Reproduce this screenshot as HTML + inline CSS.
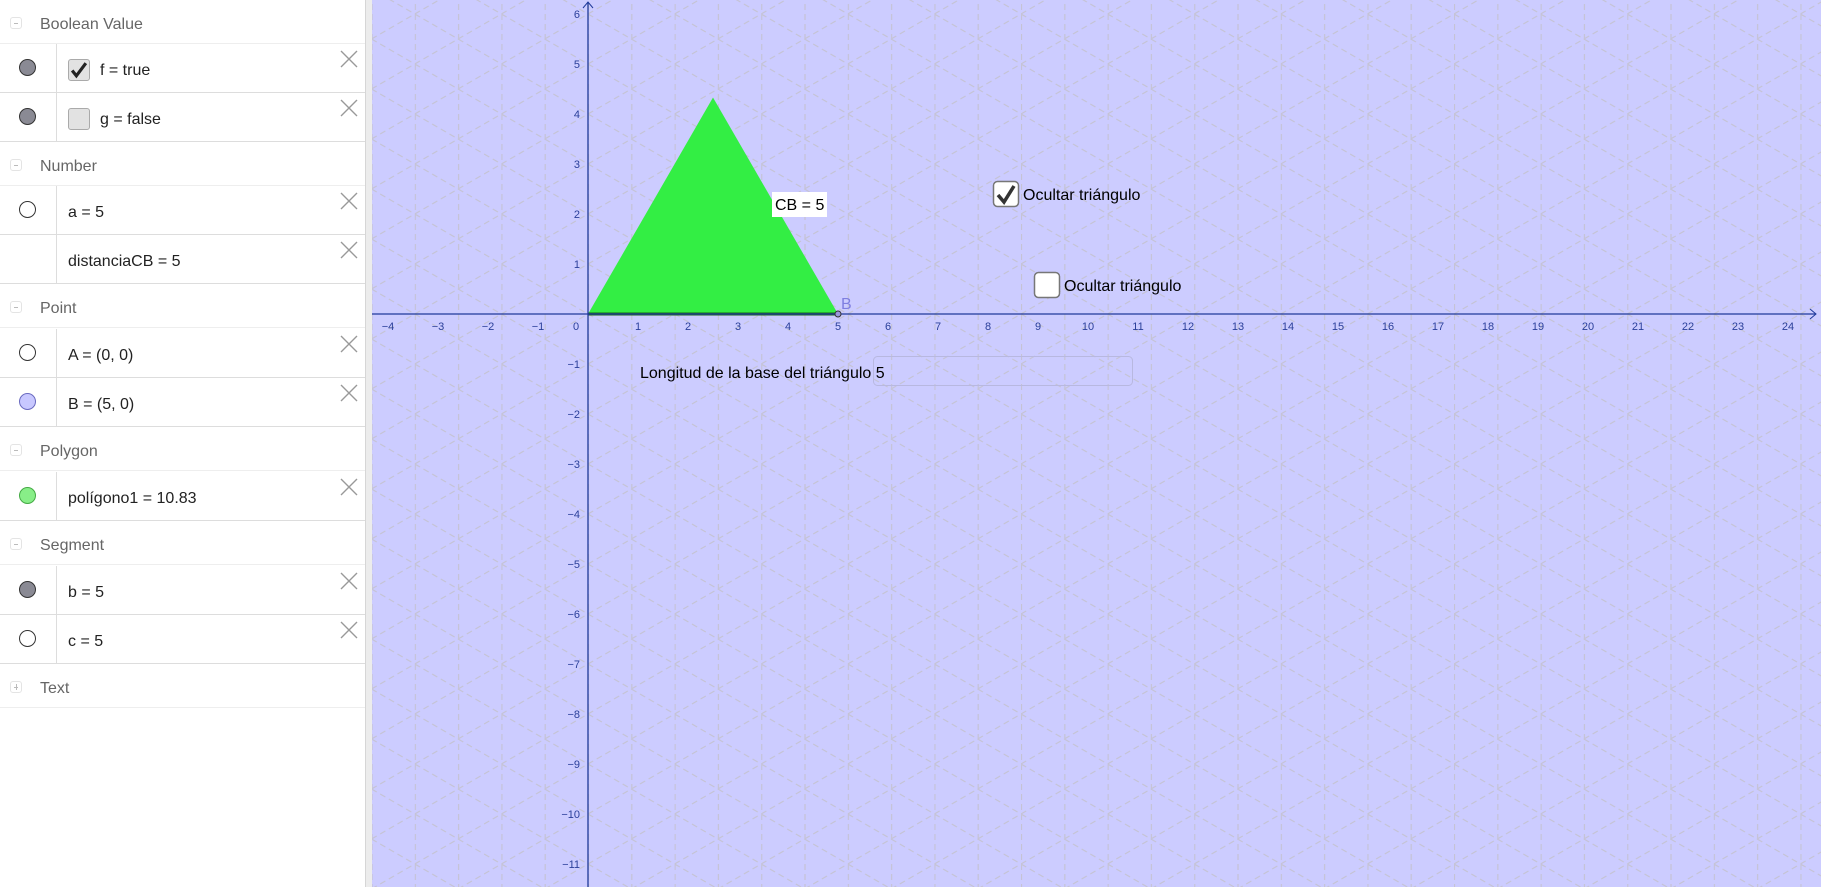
<!DOCTYPE html>
<html><head><meta charset="utf-8"><style>
body{margin:0;width:1821px;height:887px;overflow:hidden;font-family:"Liberation Sans",sans-serif;background:#fff;position:relative}
#side{position:absolute;left:0;top:0;width:365px;height:887px;background:#fff}
#sep{position:absolute;left:365px;top:0;width:7px;height:887px;background:#ececec;border-left:1px solid #d6d6d6;box-sizing:border-box}
.hdr{position:absolute;left:0;width:365px;height:44px;border-bottom:1px solid #eee;box-sizing:border-box;color:#666;font-size:16px;line-height:50px}
.hdr span.m{position:absolute;left:10px;top:17px;width:12px;height:12px;border:1px solid #e4e4e4;border-radius:3px;box-sizing:border-box}
.hdr span.m:after{content:"";position:absolute;left:3px;top:5px;width:4px;height:1px;background:#bbb}
.hdr span.p:before{content:"";position:absolute;left:5px;top:2px;width:1px;height:6px;background:#bbb}
.hdr b{font-weight:normal;position:absolute;left:40px}
.row{position:absolute;left:0;width:365px;height:49px;border-bottom:1px solid #ddd;box-sizing:border-box;font-size:16px;color:#222}
.row .v{position:absolute;left:56px;top:0;width:1px;height:48px;background:#ddd}
.row .c{position:absolute;left:19px;top:15px;width:17px;height:17px;border-radius:50%;border:1.5px solid #333;box-sizing:border-box}
.row .t{position:absolute;left:68px;top:18px;white-space:nowrap}
.row .x{position:absolute;left:340px;top:6px;width:18px;height:18px}
.cb{position:absolute;left:68px;top:15px;width:22px;height:22px;border:1px solid #aaa;border-radius:3px;background:#e2e2e2;box-sizing:border-box}
</style></head><body>
<div id="side">
<div class="hdr" style="top:0"><span class="m"></span><b>Boolean Value</b></div>
<div class="row" style="top:44px"><div class="c" style="background:#8a8a94"></div><div class="v"></div><div class="cb"><svg width="20" height="20" viewBox="0 0 19 19" style="position:absolute;left:0;top:0"><path d="M3 10 L7 15 L16 3" stroke="#222" stroke-width="3" fill="none"/></svg></div><div class="t" style="left:100px">f = true</div><svg class="x" viewBox="0 0 18 18"><path d="M1 1L17 17M17 1L1 17" stroke="#999" stroke-width="1.4"/></svg></div>
<div class="row" style="top:93px"><div class="c" style="background:#8a8a94"></div><div class="v"></div><div class="cb"></div><div class="t" style="left:100px">g = false</div><svg class="x" viewBox="0 0 18 18"><path d="M1 1L17 17M17 1L1 17" stroke="#999" stroke-width="1.4"/></svg></div>
<div class="hdr" style="top:142px"><span class="m"></span><b>Number</b></div>
<div class="row" style="top:186px"><div class="c" style="background:#fff"></div><div class="v"></div><div class="t">a = 5</div><svg class="x" viewBox="0 0 18 18"><path d="M1 1L17 17M17 1L1 17" stroke="#999" stroke-width="1.4"/></svg></div>
<div class="row" style="top:235px"><div class="v"></div><div class="t">distanciaCB = 5</div><svg class="x" viewBox="0 0 18 18"><path d="M1 1L17 17M17 1L1 17" stroke="#999" stroke-width="1.4"/></svg></div>
<div class="hdr" style="top:284px"><span class="m"></span><b>Point</b></div>
<div class="row" style="top:329px"><div class="c" style="background:#fff"></div><div class="v"></div><div class="t">A = (0, 0)</div><svg class="x" viewBox="0 0 18 18"><path d="M1 1L17 17M17 1L1 17" stroke="#999" stroke-width="1.4"/></svg></div>
<div class="row" style="top:378px"><div class="c" style="background:#c8c8ff;border-color:#6a6ac0"></div><div class="v"></div><div class="t">B = (5, 0)</div><svg class="x" viewBox="0 0 18 18"><path d="M1 1L17 17M17 1L1 17" stroke="#999" stroke-width="1.4"/></svg></div>
<div class="hdr" style="top:427px"><span class="m"></span><b>Polygon</b></div>
<div class="row" style="top:472px"><div class="c" style="background:#88ee88;border-color:#4a4"></div><div class="v"></div><div class="t">polígono1 = 10.83</div><svg class="x" viewBox="0 0 18 18"><path d="M1 1L17 17M17 1L1 17" stroke="#999" stroke-width="1.4"/></svg></div>
<div class="hdr" style="top:521px"><span class="m"></span><b>Segment</b></div>
<div class="row" style="top:566px"><div class="c" style="background:#8a8a94"></div><div class="v"></div><div class="t">b = 5</div><svg class="x" viewBox="0 0 18 18"><path d="M1 1L17 17M17 1L1 17" stroke="#999" stroke-width="1.4"/></svg></div>
<div class="row" style="top:615px"><div class="c" style="background:#fff"></div><div class="v"></div><div class="t">c = 5</div><svg class="x" viewBox="0 0 18 18"><path d="M1 1L17 17M17 1L1 17" stroke="#999" stroke-width="1.4"/></svg></div>
<div class="hdr" style="top:664px"><span class="m p"></span><b>Text</b></div>
</div>
<div id="sep"></div>
<svg style="position:absolute;left:0;top:0" width="1821" height="887">
<defs><pattern id="g" patternUnits="userSpaceOnUse" x="588" y="314" width="86.6025" height="50">
<g stroke="#bdbaa8" stroke-width="1.2" stroke-dasharray="6,4" fill="none">
<path d="M0.5 0V50M43.8 0V50"/>
<path d="M0 0L86.6025 50M0 50L86.6025 0"/>
</g></pattern></defs>
<rect x="372" y="0" width="1449" height="887" fill="#ccccff"/>
<rect x="372" y="0" width="1449" height="887" fill="url(#g)" opacity="0.5"/>
<polygon points="588,314 838,314 713,97.5" fill="#33ee44"/>
<line x1="588" y1="314" x2="838" y2="314" stroke="#1a661a" stroke-width="3"/>
<line x1="372" y1="314" x2="1816" y2="314" stroke="#1f3a9a" stroke-width="1.3"/>
<path d="M1810 309L1816 314L1810 319" stroke="#1f3a9a" fill="none"/>
<line x1="588" y1="2" x2="588" y2="887" stroke="#1f3a9a" stroke-width="1.3"/>
<path d="M583 8L588 2L593 8" stroke="#1f3a9a" fill="none"/>
<circle cx="838" cy="314" r="3" fill="#9999dd" stroke="#333"/>
<text x="841" y="309" font-size="16" fill="#7f7fe0" font-family="Liberation Sans">B</text>
<g font-family="Liberation Sans" font-size="11" fill="#2a3f9a" text-anchor="middle">
<text x="388" y="330">−4</text><text x="438" y="330">−3</text><text x="488" y="330">−2</text><text x="538" y="330">−1</text><text x="576" y="330">0</text>
<text x="638" y="330">1</text><text x="688" y="330">2</text><text x="738" y="330">3</text><text x="788" y="330">4</text><text x="838" y="330">5</text><text x="888" y="330">6</text><text x="938" y="330">7</text><text x="988" y="330">8</text><text x="1038" y="330">9</text><text x="1088" y="330">10</text><text x="1138" y="330">11</text><text x="1188" y="330">12</text><text x="1238" y="330">13</text><text x="1288" y="330">14</text><text x="1338" y="330">15</text><text x="1388" y="330">16</text><text x="1438" y="330">17</text><text x="1488" y="330">18</text><text x="1538" y="330">19</text><text x="1588" y="330">20</text><text x="1638" y="330">21</text><text x="1688" y="330">22</text><text x="1738" y="330">23</text><text x="1788" y="330">24</text>
</g>
<g font-family="Liberation Sans" font-size="11" fill="#2a3f9a" text-anchor="end">
<text x="580" y="18">6</text><text x="580" y="68">5</text><text x="580" y="118">4</text><text x="580" y="168">3</text><text x="580" y="218">2</text><text x="580" y="268">1</text>
<text x="580" y="368">−1</text><text x="580" y="418">−2</text><text x="580" y="468">−3</text><text x="580" y="518">−4</text><text x="580" y="568">−5</text><text x="580" y="618">−6</text><text x="580" y="668">−7</text><text x="580" y="718">−8</text><text x="580" y="768">−9</text><text x="580" y="818">−10</text><text x="580" y="868">−11</text>
</g>
<rect x="772" y="192" width="55" height="25" fill="#fff"/>
<text x="775" y="210" font-family="Liberation Sans" font-size="16" fill="#000">CB = 5</text>
<rect x="993.5" y="181.5" width="25" height="25" rx="4" fill="#fff" stroke="#777" stroke-width="1.5"/>
<path d="M998 195L1004 202L1014 186" stroke="#333" stroke-width="3.5" fill="none"/>
<text x="1023" y="200" font-family="Liberation Sans" font-size="16" fill="#000">Ocultar triángulo</text>
<rect x="1034.5" y="272.5" width="25" height="25" rx="4" fill="#fff" stroke="#777" stroke-width="1.5"/>
<text x="1064" y="291" font-family="Liberation Sans" font-size="16" fill="#000">Ocultar triángulo</text>
<rect x="873.5" y="356.5" width="259" height="29" rx="4" fill="none" stroke="#b8b8e0" stroke-width="1"/>
<text x="640" y="378" font-family="Liberation Sans" font-size="16" fill="#000">Longitud de la base del triángulo 5</text>
</svg>
</body></html>
